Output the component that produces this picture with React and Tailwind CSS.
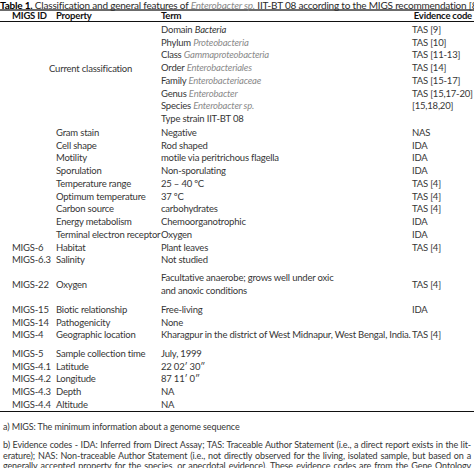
import React from "react";

const classification = [
    ["Domain", "Bacteria", "TAS [9]", true],
    ["Phylum", "Proteobacteria", "TAS [10]"],
    ["Class", "Gammaproteobacteria", "TAS [11-13]"],
    ["Order", "Enterobacteriales", "TAS [14]"],
    ["Family", "Enterobacteriaceae", "TAS [15-17]"],
    ["Genus", "Enterobacter", "TAS [15,17-20]"],
    ["Species", "Enterobacter sp.", "[15,18,20]"],
];

const features = [
    ["", "Gram stain", "Negative", "NAS"],
    ["", "Cell shape", "Rod shaped", "IDA"],
    ["", "Motility", "motile via peritrichous flagella", "IDA"],
    ["", "Sporulation", "Non-sporulating", "IDA"],
    ["", "Temperature range", "25 – 40 ºC", "TAS [4]"],
    ["", "Optimum temperature", "37 ºC", "TAS [4]"],
    ["", "Carbon source", "carbohydrates", "TAS [4]"],
    ["", "Energy metabolism", "Chemoorganotrophic", "IDA"],
    ["", "Terminal electron receptor", "Oxygen", "IDA"],
    ["MIGS-6", "Habitat", "Plant leaves", "TAS [4]"],
    ["MIGS-6.3", "Salinity", "Not studied", ""],
];

const lower = [
    ["MIGS-15", "Biotic relationship", "Free-living", "IDA"],
    ["MIGS-14", "Pathogenicity", "None", ""],
];

const location = [
    ["MIGS-5", "Sample collection time", "July, 1999", ""],
    ["MIGS-4.1", "Latitude", "22 02′ 30″", ""],
    ["MIGS-4.2", "Longitude", "87 11′ 0″", ""],
    ["MIGS-4.3", "Depth", "NA", ""],
    ["MIGS-4.4", "Altitude", "NA", ""],
];

// b) footnote is set line by line, each justified to the full width
const evidenceLines = [
    "b) Evidence codes - IDA: Inferred from Direct Assay; TAS: Traceable Author Statement (i.e., a direct report exists in the lit-",
    "erature); NAS: Non-traceable Author Statement (i.e., not directly observed for the living, isolated sample, but based on a",
    "generally accepted property for the species, or anecdotal evidence). These evidence codes are from the Gene Ontology",
];

function Row({ row, className = "h-[12.75px]" }) {
    return (
        <div className={"flex items-center whitespace-nowrap " + className}>
            <div className="w-[56px] pl-[12px]">{row[0]}</div>
            <div className="w-[105px]">{row[1]}</div>
            <div className="w-[251px]">{row[2]}</div>
            <div className="flex-1">{row[3]}</div>
        </div>
    );
}

export default function App() {
    return (
        <div className="w-[474px] h-[468px] overflow-hidden bg-white text-[#363636] text-[9.5px] tracking-[-0.2px] leading-[12px] font-['Lato',sans-serif]">
            <div className="h-[11px] border-b-2 border-[#6b6b6b] text-[10px] tracking-[-0.2px] leading-[10px] whitespace-nowrap text-[#2a2a2a]">
                <span className="font-bold text-black">Table 1.</span> Classification and general features of{" "}
                <span className="italic text-[#888]">Enterobacter sp.</span> IIT-BT 08 according to the MIGS recommendation [8]
            </div>
            <div className="flex h-[11px] items-center border-b border-[#111] font-bold text-[#111] whitespace-nowrap">
                <div className="w-[56px] pl-[12px]">MIGS ID</div>
                <div className="w-[105px]">Property</div>
                <div className="w-[251px]">Term</div>
                <div className="flex-1 text-right pr-[2px]">Evidence code</div>
            </div>

            <div className="mt-[1.6px] flex">
                <div className="w-[161px] flex items-center pl-[49px] pb-[13px] whitespace-nowrap">
                    Current classification
                </div>
                <div className="flex-1">
                    {classification.map((c) => (
                        <div key={c[0]} className="flex h-[12.75px] items-center whitespace-nowrap">
                            <div className="w-[251px]">
                                {c[0]}{" "}
                                <span className={c[3] ? "italic text-[#363636]" : "italic text-[#8a8a8a]"}>
                                    {c[1]}
                                </span>
                            </div>
                            <div className="flex-1">{c[2]}</div>
                        </div>
                    ))}
                    <div className="h-[13.75px] flex items-start pt-[0.4px] whitespace-nowrap">Type strain IIT-BT 08</div>
                </div>
            </div>

            {features.map((r) => (
                <Row key={r[1]} row={r} />
            ))}

            <div className="flex h-[36.7px] items-center">
                <div className="w-[56px] pl-[12px]">MIGS-22</div>
                <div className="w-[105px]">Oxygen</div>
                <div className="w-[251px] leading-[12.75px] whitespace-nowrap">
                    Facultative anaerobe; grows well under oxic
                    <br />
                    and anoxic conditions
                </div>
                <div className="flex-1">TAS [4]</div>
            </div>

            {lower.map((r) => (
                <Row key={r[1]} row={r} />
            ))}
            <div className="h-[18.5px]">
                <Row row={["MIGS-4", "Geographic location", "Kharagpur in the district of West Midnapur, West Bengal, India.", "TAS [4]"]} />
            </div>

            <div className="border-b-[1.5px] border-[#111]">
                {location.map((r) => (
                    <Row key={r[1]} row={r} />
                ))}
            </div>

            <div className="px-[3px] text-[9px] tracking-[-0.12px] leading-[10.7px] text-[#363636]">
                <p className="mt-[10px] whitespace-nowrap">a) MIGS: The minimum information about a genome sequence</p>
                <div className="mt-[7px]">
                    {evidenceLines.map((line) => (
                        <p key={line} className="whitespace-nowrap text-justify [text-align-last:justify]">
                            {line}
                        </p>
                    ))}
                </div>
            </div>
        </div>
    );
}
